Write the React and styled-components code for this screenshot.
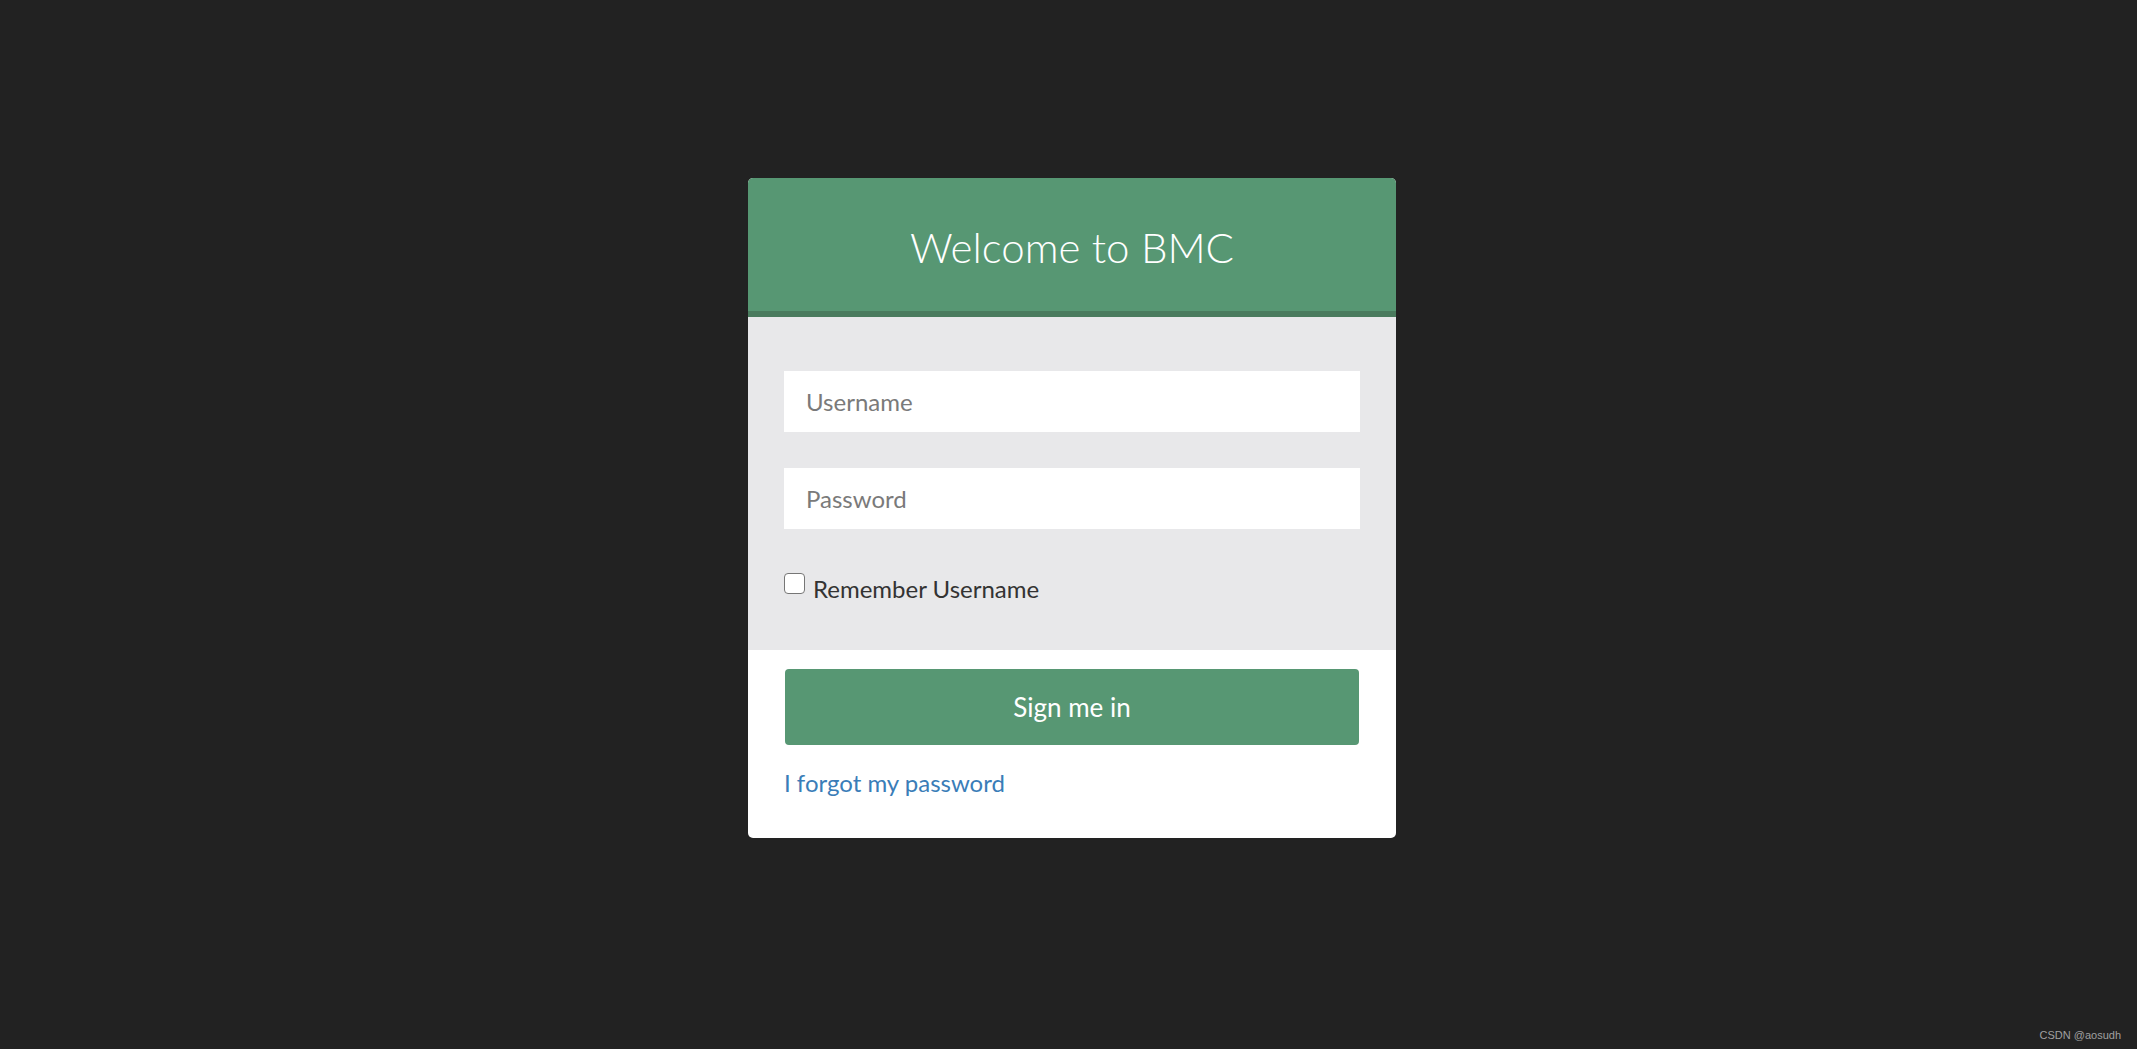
import styled, { createGlobalStyle } from "styled-components";
import { useState } from "react";

const COLORS = {
  page: "#222222",
  green: "#579773",
  greenDark: "#4a7b5e",
  panel: "#e8e8ea",
  text: "#333333",
  placeholder: "#7a7a7a",
  link: "#3a7db8",
};

const GlobalStyle = createGlobalStyle`
  html, body {
    margin: 0;
    padding: 0;
    background: ${COLORS.page};
  }

  body {
    font-family: Lato, "Open Sans", sans-serif;
  }
`;

const App = () => {
  const [remember, setRemember] = useState(false);

  return (
    <Page>
      <GlobalStyle />
      <Card>
        <Header>
          <Title>Welcome to BMC</Title>
        </Header>
        <Fields>
          <Input placeholder="Username" spellCheck={false} />
          <Input type="password" placeholder="Password" />
          <CheckRow>
            <Checkbox
              type="checkbox"
              checked={remember}
              onChange={(e) => setRemember(e.target.checked)}
            />
            <CheckLabel>Remember Username</CheckLabel>
          </CheckRow>
        </Fields>
        <Actions>
          <SignIn type="button">Sign me in</SignIn>
          <Forgot href="#">I forgot my password</Forgot>
        </Actions>
      </Card>
      <Watermark>CSDN @aosudh</Watermark>
    </Page>
  );
};

const Page = styled.main`
  position: relative;
  min-height: 100vh;
  box-sizing: border-box;

  display: flex;
  justify-content: center;
  align-items: flex-start;

  padding: 178px 0 0 7px;
  background: ${COLORS.page};
`;

const Card = styled.section`
  width: 648px;

  display: flex;
  flex-direction: column;

  background: #ffffff;
  border-radius: 5px;
  overflow: hidden;
`;

const Header = styled.header`
  height: 133px;

  display: flex;
  align-items: center;
  justify-content: center;

  background: ${COLORS.green};
  border-bottom: 6px solid ${COLORS.greenDark};
`;

const Title = styled.h1`
  margin: 4px 0 0;

  font-weight: 300;
  font-size: 42px;
  color: #ffffff;
`;

const Fields = styled.div`
  display: flex;
  flex-direction: column;
  gap: 36px;

  padding: 54px 36px 56px;
  background: ${COLORS.panel};
`;

const Input = styled.input`
  height: 61px;
  box-sizing: border-box;
  padding: 0 22px;

  font-family: inherit;
  font-size: 24px;
  color: ${COLORS.text};

  background: #ffffff;
  border: none;
  outline: none;

  &::placeholder {
    color: ${COLORS.placeholder};
  }
`;

const CheckRow = styled.label`
  height: 21px;
  margin-top: 8px;

  display: flex;
  align-items: center;
  gap: 8px;

  cursor: pointer;
`;

const Checkbox = styled.input`
  appearance: none;
  width: 21px;
  height: 21px;
  margin: 0;
  box-sizing: border-box;

  background: #ffffff;
  border: 1.5px solid #767676;
  border-radius: 4px;
  cursor: pointer;

  &:checked {
    background: ${COLORS.green};
    border-color: ${COLORS.green};
  }
`;

const CheckLabel = styled.span`
  margin-top: 10px;

  font-size: 24px;
  color: ${COLORS.text};
`;

const Actions = styled.div`
  display: flex;
  flex-direction: column;
  align-items: flex-start;

  padding: 19px 37px 40px;
`;

const SignIn = styled.button`
  width: 100%;
  height: 76px;

  font-family: inherit;
  font-size: 26px;
  color: #ffffff;

  background: ${COLORS.green};
  border: none;
  border-radius: 4px;
  cursor: pointer;
`;

const Forgot = styled.a`
  margin-top: 23px;
  margin-left: -1px;

  font-size: 24px;
  line-height: 30px;
  color: ${COLORS.link};
  text-decoration: none;
`;

const Watermark = styled.span`
  position: absolute;
  right: 16px;
  bottom: 8px;

  font-family: "Liberation Sans", Arial, sans-serif;
  font-size: 11px;
  color: #a0a0a0;
`;

export default App;
